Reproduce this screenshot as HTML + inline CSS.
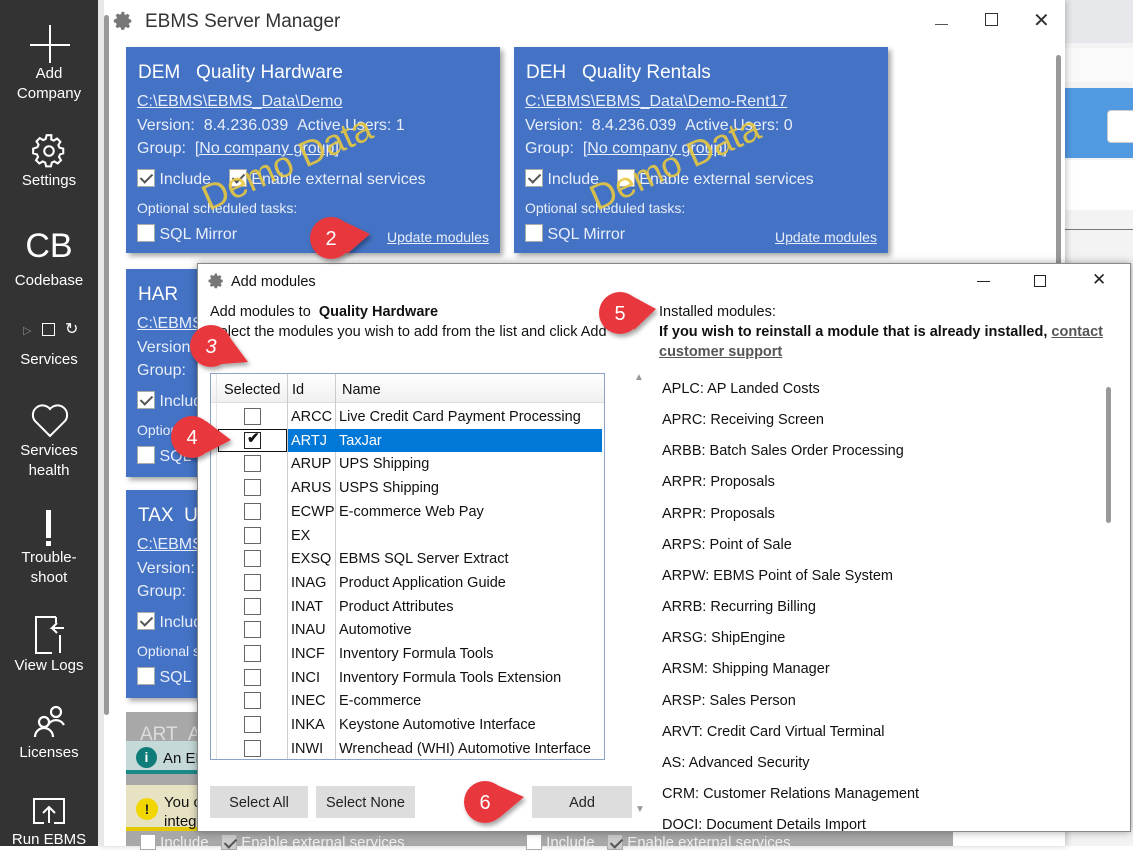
<!DOCTYPE html>
<html><head><meta charset="utf-8"><style>
*{box-sizing:border-box;margin:0;padding:0}
body{width:1133px;height:846px;overflow:hidden;position:relative;background:#fff;font-family:"Liberation Sans",sans-serif;}
.a{position:absolute;white-space:nowrap}
.side{left:0;top:0;width:98px;height:846px;background:#333;color:#fff;}
.sl{position:absolute;width:98px;text-align:center;font-size:14px;color:#fff;line-height:20px}
.card{position:absolute;background:#4472c4;color:#fff;box-shadow:3px 3px 5px rgba(0,0,0,.35)}
.card .t{position:absolute;left:12px;top:15px;font-size:19px;}
.card .p{position:absolute;left:11px;font-size:16px;color:#e8eefa}
.u{text-decoration:underline}
.cb{display:inline-block;width:18px;height:18px;background:#fff;border:1px solid #aaa;vertical-align:-3px;position:relative}
.cb.c::after{content:"";position:absolute;left:5px;top:1px;width:5px;height:10px;border:solid #555;border-width:0 2px 2px 0;transform:rotate(45deg)}
.wm{position:absolute;color:#e8c842;font-size:36px;transform:rotate(-24deg);opacity:.9}
.dlg{position:absolute;left:197px;top:263px;width:934px;height:569px;background:#fff;border:1px solid #888;box-shadow:0 0 8px rgba(0,0,0,.35)}
.row{position:absolute;left:0;width:394px;height:24px;font-size:14.5px;color:#111}
.rcb{position:absolute;left:33px;top:3px;width:17px;height:17px;border:1px solid #666;background:#fff}
.btn{position:absolute;top:786px;height:32px;background:#ddd;font-size:14.5px;color:#222;text-align:center;line-height:34px}
.li{position:absolute;left:662px;font-size:14.5px;color:#111}
</style></head><body>
<div class="a" style="left:1065px;top:0;width:68px;height:846px;background:#f3f3f3"></div>
<div class="a" style="left:1065px;top:0;width:68px;height:43px;background:#e6e8eb"></div>
<div class="a" style="left:1065px;top:48px;width:68px;height:34px;background:#fafafa"></div>
<div class="a" style="left:1065px;top:88px;width:68px;height:70px;background:#519ae2"></div>
<div class="a" style="left:1107px;top:110px;width:30px;height:33px;background:#fff;border-radius:4px;border:1px solid #ccc"></div>
<div class="a" style="left:1065px;top:160px;width:68px;height:50px;background:#fff"></div>
<div class="a" style="left:1065px;top:229px;width:68px;height:1px;background:#777"></div>

<div class="a" style="left:98px;top:0;width:967px;height:846px;background:#fff;box-shadow:2px 0 6px rgba(0,0,0,.2)"></div>
<div class="a" style="left:98px;top:0;width:6px;height:846px;background:#e8e8e8"></div>
<div class="a" style="left:104px;top:15px;width:5px;height:700px;background:#999;border-radius:3px"></div>
<div class="a" style="left:1056px;top:55px;width:5px;height:700px;background:#999;border-radius:3px"></div>
<svg class="a" style="left:112px;top:10px" width="22" height="22" viewBox="0 0 24 24"><path fill="#777" d="M12 8a4 4 0 1 0 0 8 4 4 0 0 0 0-8zm9 5.5v-3l-2.4-.6-.7-1.6 1.3-2.1-2.1-2.1-2.1 1.3-1.6-.7L13.5 2h-3l-.6 2.4-1.6.7-2.1-1.3-2.1 2.1 1.3 2.1-.7 1.6L2 10.5v3l2.4.6.7 1.6-1.3 2.1 2.1 2.1 2.1-1.3 1.6.7.6 2.4h3l.6-2.4 1.6-.7 2.1 1.3 2.1-2.1-1.3-2.1.7-1.6z"/></svg>
<div class="a" style="left:145px;top:11px;font-size:19px;color:#333">EBMS Server Manager</div>
<div class="a" style="left:935px;top:24px;width:13px;height:1px;background:#555"></div>
<div class="a" style="left:985px;top:13px;width:13px;height:13px;border:1px solid #333"></div>
<div class="a" style="left:1033px;top:8px;font-size:20px;color:#333">✕</div>

<div class="card" style="left:126px;top:47px;width:374px;height:206px">
 <div class="t">DEM &nbsp; Quality Hardware</div>
 <div class="p u" style="top:46px">C:\EBMS\EBMS_Data\Demo</div>
 <div class="p" style="top:70px">Version: &nbsp;8.4.236.039 &nbsp;Active Users: 1</div>
 <div class="p" style="top:93px">Group: &nbsp;<span class="u">[No company group]</span></div>
 <div class="p" style="top:122px"><span class="cb c"></span> Include &nbsp; &nbsp;<span class="cb c"></span> Enable external services</div>
 <div class="p" style="top:153px;font-size:14px">Optional scheduled tasks:</div>
 <div class="p" style="top:177px"><span class="cb"></span> SQL Mirror</div>
 <div class="p u" style="top:182px;left:261px;font-size:14px">Update modules</div>
 <div class="wm" style="left:70px;top:95px">Demo Data</div>
</div>
<div class="card" style="left:514px;top:47px;width:374px;height:206px">
 <div class="t">DEH &nbsp; Quality Rentals</div>
 <div class="p u" style="top:46px">C:\EBMS\EBMS_Data\Demo-Rent17</div>
 <div class="p" style="top:70px">Version: &nbsp;8.4.236.039 &nbsp;Active Users: 0</div>
 <div class="p" style="top:93px">Group: &nbsp;<span class="u">[No company group]</span></div>
 <div class="p" style="top:122px"><span class="cb c"></span> Include &nbsp; &nbsp;<span class="cb"></span> Enable external services</div>
 <div class="p" style="top:153px;font-size:14px">Optional scheduled tasks:</div>
 <div class="p" style="top:177px"><span class="cb"></span> SQL Mirror</div>
 <div class="p u" style="top:182px;left:261px;font-size:14px">Update modules</div>
 <div class="wm" style="left:70px;top:95px">Demo Data</div>
</div>
<div class="card" style="left:126px;top:269px;width:374px;height:208px">
 <div class="t">HAR</div>
 <div class="p u" style="top:46px">C:\EBMS</div>
 <div class="p" style="top:70px">Version:</div>
 <div class="p" style="top:93px">Group:</div>
 <div class="p" style="top:122px"><span class="cb c"></span> Include</div>
 <div class="p" style="top:153px;font-size:14px">Optional</div>
 <div class="p" style="top:177px"><span class="cb"></span> SQL</div>
</div>
<div class="card" style="left:126px;top:490px;width:374px;height:208px">
 <div class="t">TAX &nbsp;U</div>
 <div class="p u" style="top:46px">C:\EBMS</div>
 <div class="p" style="top:70px">Version:</div>
 <div class="p" style="top:93px">Group:</div>
 <div class="p" style="top:122px"><span class="cb c"></span> Include</div>
 <div class="p" style="top:153px;font-size:14px">Optional s</div>
 <div class="p" style="top:177px"><span class="cb"></span> SQL</div>
</div>
<div class="a" style="left:126px;top:712px;width:827px;height:134px;background:#a8a8a8"></div>
<div class="a" style="left:140px;top:724px;font-size:19px;color:#ddd">ART &nbsp;A</div>
<div class="a" style="left:126px;top:741px;width:827px;height:33px;background:#c4d9d8;border-bottom:4px solid #1a8a88"></div>
<div class="a" style="left:136px;top:747px;width:21px;height:21px;border-radius:50%;background:#0f7c7a;color:#fff;font-size:14px;font-weight:bold;text-align:center;line-height:21px">i</div>
<div class="a" style="left:163px;top:750px;font-size:15px;color:#111">An EBMS</div>
<div class="a" style="left:126px;top:785px;width:827px;height:46px;background:#e6e2c2;border-bottom:4px solid #e3c800"></div>
<div class="a" style="left:136px;top:798px;width:22px;height:22px;border-radius:50%;background:#f2d600;color:#222;font-size:14px;font-weight:bold;text-align:center;line-height:22px">!</div>
<div class="a" style="left:164px;top:793px;font-size:15px;color:#111;line-height:19px">You c<br>integ</div>
<div class="a" style="left:140px;top:834px;font-size:15px;color:#eee"><span class="cb" style="width:16px;height:16px"></span> Include &nbsp; <span class="cb c" style="width:16px;height:16px;background:#ccc"></span> Enable external services</div>
<div class="a" style="left:526px;top:834px;font-size:15px;color:#eee;width:362px;height:12px;background:#a8a8a8"><span class="cb" style="width:16px;height:16px"></span> Include &nbsp; <span class="cb c" style="width:16px;height:16px;background:#ccc"></span> Enable external services</div>

<div class="a side"></div>
<div class="a" style="left:30px;top:44px;width:40px;height:2px;background:#fff"></div>
<div class="a" style="left:49px;top:25px;width:2px;height:38px;background:#fff"></div>
<div class="sl" style="top:64px;font-size:15px">Add<br>Company</div>
<svg class="a" style="left:30px;top:132px" width="38" height="38" viewBox="0 0 24 24"><path fill="none" stroke="#fff" stroke-width="1.3" d="M12 9a3 3 0 1 0 0 6 3 3 0 0 0 0-6zm9 4.5v-3l-2.4-.6-.7-1.6 1.3-2.1-2.1-2.1-2.1 1.3-1.6-.7L13.5 2h-3l-.6 2.4-1.6.7-2.1-1.3-2.1 2.1 1.3 2.1-.7 1.6L2 10.5v3l2.4.6.7 1.6-1.3 2.1 2.1 2.1 2.1-1.3 1.6.7.6 2.4h3l.6-2.4 1.6-.7 2.1 1.3 2.1-2.1-1.3-2.1.7-1.6z"/></svg>
<div class="sl" style="top:171px;font-size:15px">Settings</div>
<div class="sl" style="top:226px;font-size:34px;line-height:40px">CB</div>
<div class="sl" style="top:271px;font-size:15px">Codebase</div>
<div class="a" style="left:23px;top:324px;color:#888;font-size:11px">▷</div>
<div class="a" style="left:42px;top:323px;width:13px;height:13px;border:1.5px solid #fff"></div>
<div class="a" style="left:65px;top:319px;color:#fff;font-size:16px">↻</div>
<div class="sl" style="top:350px;font-size:15px">Services</div>
<svg class="a" style="left:30px;top:403px" width="40" height="36" viewBox="0 0 40 36"><path fill="none" stroke="#fff" stroke-width="2" d="M20 33 L5 18 A9 9 0 0 1 20 6 A9 9 0 0 1 35 18 Z"/></svg>
<div class="sl" style="top:441px;font-size:15px">Services<br>health</div>
<div class="a" style="left:46px;top:510px;width:5px;height:28px;background:#fff"></div>
<div class="a" style="left:46px;top:541px;width:5px;height:5px;background:#fff"></div>
<div class="sl" style="top:548px;font-size:15px">Trouble-<br>shoot</div>
<svg class="a" style="left:34px;top:615px" width="34" height="40" viewBox="0 0 34 40"><path fill="none" stroke="#fff" stroke-width="2" d="M22 2H2v36h16M22 2v6M30 13H18l5-5M18 13l5 5M26 20v18"/></svg>
<div class="sl" style="top:656px;font-size:15px">View Logs</div>
<svg class="a" style="left:32px;top:703px" width="36" height="36" viewBox="0 0 36 36"><g fill="none" stroke="#fff" stroke-width="2.2"><circle cx="24" cy="9" r="5"/><path d="M16 22a9 9 0 0 1 16 0"/><circle cx="12" cy="19" r="5"/><path d="M3 34a9 9 0 0 1 18 0"/></g></svg>
<div class="sl" style="top:743px;font-size:15px">Licenses</div>
<svg class="a" style="left:32px;top:797px" width="34" height="28" viewBox="0 0 34 28"><path fill="none" stroke="#fff" stroke-width="2" d="M12 26H2V2h30v24H22M17 26V10M11 16l6-6 6 6"/></svg>
<div class="sl" style="top:830px;font-size:15px">Run EBMS</div>

<div class="dlg"></div>
<svg class="a" style="left:207px;top:272px" width="18" height="18" viewBox="0 0 24 24"><path fill="#777" d="M12 8a4 4 0 1 0 0 8 4 4 0 0 0 0-8zm9 5.5v-3l-2.4-.6-.7-1.6 1.3-2.1-2.1-2.1-2.1 1.3-1.6-.7L13.5 2h-3l-.6 2.4-1.6.7-2.1-1.3-2.1 2.1 1.3 2.1-.7 1.6L2 10.5v3l2.4.6.7 1.6-1.3 2.1 2.1 2.1 2.1-1.3 1.6.7.6 2.4h3l.6-2.4 1.6-.7 2.1 1.3 2.1-2.1-1.3-2.1.7-1.6z"/></svg>
<div class="a" style="left:231px;top:274px;font-size:14.5px;color:#111">Add modules</div>
<div class="a" style="left:977px;top:281px;width:13px;height:1px;background:#222"></div>
<div class="a" style="left:1034px;top:275px;width:12px;height:12px;border:1px solid #222"></div>
<div class="a" style="left:1092px;top:270px;font-size:17px;color:#222">✕</div>
<div class="a" style="left:210px;top:304px;font-size:14.5px;color:#111">Add modules to &nbsp;<b>Quality Hardware</b></div>
<div class="a" style="left:210px;top:324px;font-size:14.5px;color:#111">Select the modules you wish to add from the list and click Add</div>

<div class="a" style="left:210px;top:373px;width:395px;height:387px;border:1px solid #8aa4c8;background:#fff;overflow:hidden">
 <div class="a" style="left:0;top:0;width:394px;height:29px;background:linear-gradient(#fff,#f0f0f0);border-bottom:1px solid #ddd"></div>
 <div class="a" style="left:13px;top:8px;font-size:14.5px;color:#111">Selected</div>
 <div class="a" style="left:81px;top:8px;font-size:14.5px;color:#111">Id</div>
 <div class="a" style="left:131px;top:8px;font-size:14.5px;color:#111">Name</div>
 <div class="a" style="left:76px;top:0;width:1px;height:387px;background:#ccc"></div>
 <div class="a" style="left:124px;top:0;width:1px;height:387px;background:#ccc"></div>
 <div class="a" style="left:5px;top:0;width:1px;height:387px;background:#e4e4e4"></div>
 <div id="rows"></div>
</div>
<div class="a" style="left:634px;top:372px;color:#999;font-size:10px">▲</div>
<div class="btn" style="left:210px;width:98px">Select All</div>
<div class="btn" style="left:316px;width:99px">Select None</div>
<div class="btn" style="left:532px;width:100px">Add</div>
<div class="a" style="left:635px;top:804px;color:#999;font-size:10px">▼</div>

<div class="a" style="left:659px;top:304px;font-size:14.5px;color:#111">Installed modules:</div>
<div class="a" style="left:659px;top:324px;font-size:14.5px;color:#111;font-weight:bold">If you wish to reinstall a module that is already installed, <span class="u" style="color:#555">contact</span></div>
<div class="a u" style="left:659px;top:344px;font-size:14.5px;color:#555;font-weight:bold">customer support</div>
<div class="a" style="left:1106px;top:387px;width:5px;height:136px;background:#999;border-radius:3px"></div>
<div id="list"></div>

<svg class="a" style="left:0;top:0;overflow:visible" width="1133" height="846">
 <defs><filter id="s"><feDropShadow dx="2" dy="3" stdDeviation="2" flood-opacity=".35"/></filter></defs>
 <g filter="url(#s)" fill="#e8383d">
  <circle cx="331" cy="238" r="21"/><path d="M345 222 L370 234 L347 254Z"/>
  <circle cx="211" cy="346" r="21"/><path d="M225 331 L248 362 L222 364Z"/>
  <circle cx="192" cy="437" r="21"/><path d="M206 421 L231 440 L206 453Z"/>
  <circle cx="620" cy="313" r="21"/><path d="M632 296 L656 309 L634 330Z"/>
  <circle cx="485" cy="802" r="21"/><path d="M497 785 L524 797 L499 818Z"/>
 </g>
 <g fill="#fff" font-family="Liberation Sans" font-size="20" text-anchor="middle">
  <text x="331" y="245">2</text><text x="211" y="353" font-style="italic">3</text><text x="192" y="444">4</text><text x="620" y="320">5</text><text x="485" y="809">6</text>
 </g>
</svg>
<script>
var r=[["ARCC","Live Credit Card Payment Processing"],["ARTJ","TaxJar"],["ARUP","UPS Shipping"],["ARUS","USPS Shipping"],["ECWP","E-commerce Web Pay"],["EX",""],["EXSQ","EBMS SQL Server Extract"],["INAG","Product Application Guide"],["INAT","Product Attributes"],["INAU","Automotive"],["INCF","Inventory Formula Tools"],["INCI","Inventory Formula Tools Extension"],["INEC","E-commerce"],["INKA","Keystone Automotive Interface"],["INWI","Wrenchead (WHI) Automotive Interface"]];
var h="";r.forEach(function(x,i){var t=31+i*23.7,s=i==1;
h+='<div class="row" style="top:'+t+'px">'+(s?'<div class="a" style="left:77px;top:0;width:314px;height:23px;background:#0078d7"></div><div class="a" style="left:7px;top:0;width:69px;height:23px;border:1.5px solid #111"></div>':'')+'<div class="rcb"'+(s?' style="border-color:#222"':'')+'>'+(s?'<div class="a" style="left:2px;top:-4px;font-size:15px;font-weight:bold;color:#111">✔</div>':'')+'</div><div class="a" style="left:80px;top:4px;color:'+(s?'#fff':'#111')+'">'+x[0]+'</div><div class="a" style="left:128px;top:4px;color:'+(s?'#fff':'#111')+'">'+x[1]+'</div></div>';});
document.getElementById("rows").innerHTML=h;
var l=["APLC: AP Landed Costs","APRC: Receiving Screen","ARBB: Batch Sales Order Processing","ARPR: Proposals","ARPR: Proposals","ARPS: Point of Sale","ARPW: EBMS Point of Sale System","ARRB: Recurring Billing","ARSG: ShipEngine","ARSM: Shipping Manager","ARSP: Sales Person","ARVT: Credit Card Virtual Terminal","AS: Advanced Security","CRM: Customer Relations Management","DOCI: Document Details Import"];
h="";l.forEach(function(x,i){var t=381+i*31.15;h+='<div class="li a" style="top:'+t+'px;'+(t>815?'height:'+(831-t)+'px;overflow:hidden':'')+'">'+x+'</div>';});
document.getElementById("list").innerHTML=h;
</script>
</body></html>
